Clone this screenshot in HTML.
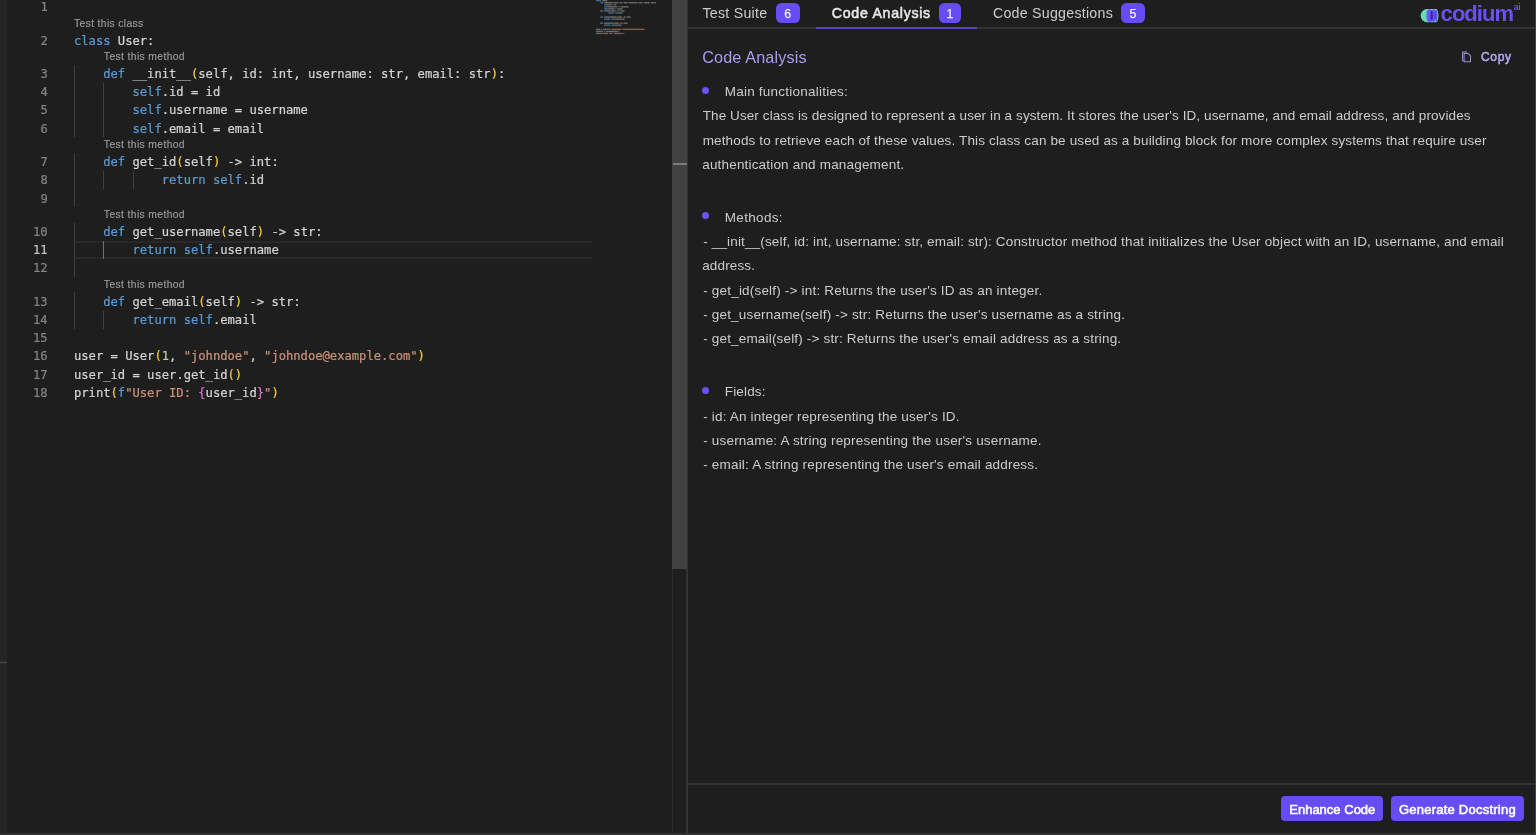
<!DOCTYPE html>
<html lang="en">
<head>
<meta charset="utf-8">
<title>Codium - Code Analysis</title>
<style>
html,body{margin:0;padding:0;width:1536px;height:835px;overflow:hidden;background:#1e1e1e}
body{position:relative;font-family:"Liberation Sans",Arial,sans-serif;color:#cccccc}
div{box-sizing:border-box}
#root{position:absolute;left:0;top:0;width:1536px;height:835px;will-change:transform}
#strip{position:absolute;left:0;top:0;width:7px;height:833px;background:#252526;border-right:0}
#strip b{position:absolute;left:7px;top:0;width:1px;height:833px;background:#202020}
#strip i{position:absolute;left:0;top:661px;width:7px;height:3px;background:linear-gradient(#2b2b2c 0 33.3%,#454545 33.3% 66.6%,#2c2c2d 66.6% 100%)}
#ed{position:absolute;left:0;top:0;width:672px;height:833px;overflow:hidden}
.no,.ln{position:absolute;font-family:"DejaVu Sans Mono","Liberation Mono",monospace;font-size:12.15px;line-height:18.22px;height:18.22px;white-space:pre;color:#d4d4d4}
.no{left:0;width:47.7px;text-align:right;color:#858585;-webkit-text-stroke:0.2px}
.no.act{color:#c6c6c6}
.ln{left:74px;-webkit-text-stroke:0.22px}
.k{color:#5a9ad5}.s{color:#ce9178}.n{color:#b5cea8}.b1{color:#f2cb3a}.b2{color:#da70d6}
.lens{position:absolute;font-family:"Liberation Sans",Arial,sans-serif;font-size:10.3px;line-height:15.19px;height:15.19px;color:#9c9c9c;white-space:pre;-webkit-text-stroke:0.15px}
.g{position:absolute;width:1px;background:#404040}
.g.ga{background:#707070}
.cl{position:absolute;left:74px;width:518px;border-top:2px solid #282828;border-bottom:2px solid #282828;box-sizing:content-box}
#sb{position:absolute;left:672px;top:0;width:15px;height:569px;background:#424242;border-right:0 solid #313131}
#sb2{position:absolute;left:687px;top:0;width:1px;height:569px;background:#323232}
#sb i{position:absolute;left:1px;top:163px;width:13.5px;height:2px;background:#7a7a7a}
.vl{position:absolute;background:#2b2b2b}
.t{position:absolute;white-space:pre}
.bdg{position:absolute;top:2.6px;height:20.2px;-webkit-text-stroke:0.25px;border-radius:5.5px;background:#654df3;color:#f1eeff;font-size:12.3px;line-height:22.2px;text-align:center}
.dot{position:absolute;left:702.2px;width:7px;height:7px;border-radius:50%;background:#6a52f5}
.btn{position:absolute;top:796.3px;height:24.7px;border-radius:4px;background:#654df3}
</style>
</head>
<body>
<div id="root">
<div id="strip"><i></i><b></b></div>
<div id="ed">
<div class="cl" style="top:240.78px;height:14.22px"></div>
<div class="g" style="left:74.00px;top:64.62px;height:72.89px"></div>
<div class="g" style="left:74.00px;top:152.70px;height:54.67px"></div>
<div class="g" style="left:74.00px;top:222.55px;height:54.67px"></div>
<div class="g" style="left:74.00px;top:292.41px;height:36.45px"></div>
<div class="g" style="left:103.26px;top:82.84px;height:54.67px"></div>
<div class="g" style="left:103.26px;top:170.92px;height:18.22px"></div>
<div class="g" style="left:132.51px;top:170.92px;height:18.22px"></div>
<div class="g" style="left:103.26px;top:310.63px;height:18.22px"></div>
<div class="g ga" style="left:103.26px;top:240.78px;height:18.22px"></div>
<div class="no" style="top:-2.00px">1</div>
<div class="no" style="top:32.00px">2</div>
<div class="ln" style="top:32.00px"><span class="k">class</span> User:</div>
<div class="lens" style="top:16.00px;left:74.10px;letter-spacing:0.355px">Test this class</div>
<div class="no" style="top:65.00px">3</div>
<div class="ln" style="top:65.00px">    <span class="k">def</span> __init__<span class="b1">(</span>self, id: int, username: str, email: str<span class="b1">)</span>:</div>
<div class="lens" style="top:49.00px;left:103.86px;letter-spacing:0.384px">Test this method</div>
<div class="no" style="top:83.00px">4</div>
<div class="ln" style="top:83.00px">        <span class="k">self</span>.id = id</div>
<div class="no" style="top:101.00px">5</div>
<div class="ln" style="top:101.00px">        <span class="k">self</span>.username = username</div>
<div class="no" style="top:120.00px">6</div>
<div class="ln" style="top:120.00px">        <span class="k">self</span>.email = email</div>
<div class="no" style="top:153.00px">7</div>
<div class="ln" style="top:153.00px">    <span class="k">def</span> get_id<span class="b1">(</span>self<span class="b1">)</span> -&gt; int:</div>
<div class="lens" style="top:137.00px;left:103.86px;letter-spacing:0.384px">Test this method</div>
<div class="no" style="top:171.00px">8</div>
<div class="ln" style="top:171.00px">            <span class="k">return</span> <span class="k">self</span>.id</div>
<div class="no" style="top:190.00px">9</div>
<div class="no" style="top:223.00px">10</div>
<div class="ln" style="top:223.00px">    <span class="k">def</span> get_username<span class="b1">(</span>self<span class="b1">)</span> -&gt; str:</div>
<div class="lens" style="top:207.00px;left:103.86px;letter-spacing:0.384px">Test this method</div>
<div class="no act" style="top:241.00px">11</div>
<div class="ln" style="top:241.00px">        <span class="k">return</span> <span class="k">self</span>.username</div>
<div class="no" style="top:259.00px">12</div>
<div class="no" style="top:293.00px">13</div>
<div class="ln" style="top:293.00px">    <span class="k">def</span> get_email<span class="b1">(</span>self<span class="b1">)</span> -&gt; str:</div>
<div class="lens" style="top:277.00px;left:103.86px;letter-spacing:0.384px">Test this method</div>
<div class="no" style="top:311.00px">14</div>
<div class="ln" style="top:311.00px">        <span class="k">return</span> <span class="k">self</span>.email</div>
<div class="no" style="top:329.00px">15</div>
<div class="no" style="top:347.00px">16</div>
<div class="ln" style="top:347.00px">user = User<span class="b1">(</span><span class="n">1</span>, <span class="s">"johndoe"</span>, <span class="s">"johndoe@example.com"</span><span class="b1">)</span></div>
<div class="no" style="top:366.00px">17</div>
<div class="ln" style="top:366.00px">user_id = user.get_id<span class="b1">()</span></div>
<div class="no" style="top:384.00px">18</div>
<div class="ln" style="top:384.00px">print<span class="b1">(</span><span class="k">f</span><span class="s">"User ID: </span><span class="b2">{</span>user_id<span class="b2">}</span><span class="s">"</span><span class="b1">)</span></div>
</div>
<svg id="mm" style="position:absolute;left:585px;top:0" width="86" height="40" viewBox="0 0 86 40"><rect x="11.10" y="-0.05" width="5.07" height="1.4" fill="#569cd6" opacity="0.6"/><rect x="17.19" y="-0.05" width="5.07" height="1.4" fill="#d4d4d4" opacity="0.42"/><rect x="15.16" y="2.00" width="3.04" height="1.4" fill="#569cd6" opacity="0.6"/><rect x="19.22" y="2.00" width="8.12" height="1.4" fill="#d4d4d4" opacity="0.42"/><rect x="27.34" y="2.00" width="1.01" height="1.4" fill="#ffd700" opacity="0.3"/><rect x="28.36" y="2.00" width="5.07" height="1.4" fill="#d4d4d4" opacity="0.42"/><rect x="34.45" y="2.00" width="3.04" height="1.4" fill="#d4d4d4" opacity="0.42"/><rect x="38.50" y="2.00" width="4.06" height="1.4" fill="#d4d4d4" opacity="0.42"/><rect x="43.58" y="2.00" width="9.13" height="1.4" fill="#d4d4d4" opacity="0.42"/><rect x="53.73" y="2.00" width="4.06" height="1.4" fill="#d4d4d4" opacity="0.42"/><rect x="58.81" y="2.00" width="6.09" height="1.4" fill="#d4d4d4" opacity="0.42"/><rect x="65.91" y="2.00" width="3.04" height="1.4" fill="#d4d4d4" opacity="0.42"/><rect x="68.96" y="2.00" width="1.01" height="1.4" fill="#ffd700" opacity="0.3"/><rect x="69.97" y="2.00" width="1.01" height="1.4" fill="#d4d4d4" opacity="0.42"/><rect x="19.22" y="4.05" width="4.06" height="1.4" fill="#569cd6" opacity="0.6"/><rect x="23.28" y="4.05" width="3.04" height="1.4" fill="#d4d4d4" opacity="0.42"/><rect x="27.34" y="4.05" width="1.01" height="1.4" fill="#d4d4d4" opacity="0.42"/><rect x="29.37" y="4.05" width="2.03" height="1.4" fill="#d4d4d4" opacity="0.42"/><rect x="19.22" y="6.10" width="4.06" height="1.4" fill="#569cd6" opacity="0.6"/><rect x="23.28" y="6.10" width="9.13" height="1.4" fill="#d4d4d4" opacity="0.42"/><rect x="33.43" y="6.10" width="1.01" height="1.4" fill="#d4d4d4" opacity="0.42"/><rect x="35.46" y="6.10" width="8.12" height="1.4" fill="#d4d4d4" opacity="0.42"/><rect x="19.22" y="8.15" width="4.06" height="1.4" fill="#569cd6" opacity="0.6"/><rect x="23.28" y="8.15" width="6.09" height="1.4" fill="#d4d4d4" opacity="0.42"/><rect x="30.38" y="8.15" width="1.01" height="1.4" fill="#d4d4d4" opacity="0.42"/><rect x="32.41" y="8.15" width="5.07" height="1.4" fill="#d4d4d4" opacity="0.42"/><rect x="15.16" y="10.20" width="3.04" height="1.4" fill="#569cd6" opacity="0.6"/><rect x="19.22" y="10.20" width="6.09" height="1.4" fill="#d4d4d4" opacity="0.42"/><rect x="25.31" y="10.20" width="1.01" height="1.4" fill="#ffd700" opacity="0.3"/><rect x="26.33" y="10.20" width="4.06" height="1.4" fill="#d4d4d4" opacity="0.42"/><rect x="30.38" y="10.20" width="1.01" height="1.4" fill="#ffd700" opacity="0.3"/><rect x="32.41" y="10.20" width="2.03" height="1.4" fill="#d4d4d4" opacity="0.42"/><rect x="35.46" y="10.20" width="4.06" height="1.4" fill="#d4d4d4" opacity="0.42"/><rect x="23.28" y="12.25" width="6.09" height="1.4" fill="#569cd6" opacity="0.6"/><rect x="30.38" y="12.25" width="4.06" height="1.4" fill="#569cd6" opacity="0.6"/><rect x="34.45" y="12.25" width="3.04" height="1.4" fill="#d4d4d4" opacity="0.42"/><rect x="15.16" y="16.35" width="3.04" height="1.4" fill="#569cd6" opacity="0.6"/><rect x="19.22" y="16.35" width="12.18" height="1.4" fill="#d4d4d4" opacity="0.42"/><rect x="31.40" y="16.35" width="1.01" height="1.4" fill="#ffd700" opacity="0.3"/><rect x="32.41" y="16.35" width="4.06" height="1.4" fill="#d4d4d4" opacity="0.42"/><rect x="36.48" y="16.35" width="1.01" height="1.4" fill="#ffd700" opacity="0.3"/><rect x="38.50" y="16.35" width="2.03" height="1.4" fill="#d4d4d4" opacity="0.42"/><rect x="41.55" y="16.35" width="4.06" height="1.4" fill="#d4d4d4" opacity="0.42"/><rect x="19.22" y="18.40" width="6.09" height="1.4" fill="#569cd6" opacity="0.6"/><rect x="26.33" y="18.40" width="4.06" height="1.4" fill="#569cd6" opacity="0.6"/><rect x="30.38" y="18.40" width="9.13" height="1.4" fill="#d4d4d4" opacity="0.42"/><rect x="15.16" y="22.50" width="3.04" height="1.4" fill="#569cd6" opacity="0.6"/><rect x="19.22" y="22.50" width="9.13" height="1.4" fill="#d4d4d4" opacity="0.42"/><rect x="28.36" y="22.50" width="1.01" height="1.4" fill="#ffd700" opacity="0.3"/><rect x="29.37" y="22.50" width="4.06" height="1.4" fill="#d4d4d4" opacity="0.42"/><rect x="33.43" y="22.50" width="1.01" height="1.4" fill="#ffd700" opacity="0.3"/><rect x="35.46" y="22.50" width="2.03" height="1.4" fill="#d4d4d4" opacity="0.42"/><rect x="38.50" y="22.50" width="4.06" height="1.4" fill="#d4d4d4" opacity="0.42"/><rect x="19.22" y="24.55" width="6.09" height="1.4" fill="#569cd6" opacity="0.6"/><rect x="26.33" y="24.55" width="4.06" height="1.4" fill="#569cd6" opacity="0.6"/><rect x="30.38" y="24.55" width="6.09" height="1.4" fill="#d4d4d4" opacity="0.42"/><rect x="11.10" y="28.65" width="4.06" height="1.4" fill="#d4d4d4" opacity="0.42"/><rect x="16.18" y="28.65" width="1.01" height="1.4" fill="#d4d4d4" opacity="0.42"/><rect x="18.21" y="28.65" width="4.06" height="1.4" fill="#d4d4d4" opacity="0.42"/><rect x="22.26" y="28.65" width="1.01" height="1.4" fill="#ffd700" opacity="0.3"/><rect x="23.28" y="28.65" width="1.01" height="1.4" fill="#b5cea8" opacity="0.4"/><rect x="24.30" y="28.65" width="1.01" height="1.4" fill="#d4d4d4" opacity="0.42"/><rect x="26.33" y="28.65" width="9.13" height="1.4" fill="#ce9178" opacity="0.55"/><rect x="35.46" y="28.65" width="1.01" height="1.4" fill="#d4d4d4" opacity="0.42"/><rect x="37.49" y="28.65" width="21.31" height="1.4" fill="#ce9178" opacity="0.55"/><rect x="58.81" y="28.65" width="1.01" height="1.4" fill="#ffd700" opacity="0.3"/><rect x="11.10" y="30.70" width="7.10" height="1.4" fill="#d4d4d4" opacity="0.42"/><rect x="19.22" y="30.70" width="1.01" height="1.4" fill="#d4d4d4" opacity="0.42"/><rect x="21.25" y="30.70" width="11.16" height="1.4" fill="#d4d4d4" opacity="0.42"/><rect x="32.41" y="30.70" width="2.03" height="1.4" fill="#ffd700" opacity="0.3"/><rect x="11.10" y="32.75" width="5.07" height="1.4" fill="#d4d4d4" opacity="0.42"/><rect x="16.18" y="32.75" width="1.01" height="1.4" fill="#ffd700" opacity="0.3"/><rect x="17.19" y="32.75" width="1.01" height="1.4" fill="#569cd6" opacity="0.6"/><rect x="18.21" y="32.75" width="5.07" height="1.4" fill="#ce9178" opacity="0.55"/><rect x="24.30" y="32.75" width="3.04" height="1.4" fill="#ce9178" opacity="0.55"/><rect x="28.36" y="32.75" width="1.01" height="1.4" fill="#da70d6" opacity="0.3"/><rect x="29.37" y="32.75" width="7.10" height="1.4" fill="#d4d4d4" opacity="0.42"/><rect x="36.48" y="32.75" width="1.01" height="1.4" fill="#da70d6" opacity="0.3"/><rect x="37.49" y="32.75" width="1.01" height="1.4" fill="#ce9178" opacity="0.55"/><rect x="38.50" y="32.75" width="1.01" height="1.4" fill="#ffd700" opacity="0.3"/></svg>
<div class="vl" style="left:672px;top:569px;width:1px;height:264px;background:#2c2c2c"></div>
<div class="vl" style="left:686px;top:569px;width:2px;height:264px;background:#333333"></div>
<div id="sb"><i></i></div><div id="sb2"></div>
<div id="hdrline" style="position:absolute;left:688px;top:27px;width:848px;height:1.5px;background:#333333"></div>
<div id="tabul" style="position:absolute;left:815.6px;top:26.8px;width:161.5px;height:2px;background:#5644c6"></div>
<div class="bdg" style="left:776px;width:23.5px">6</div>
<div class="bdg" style="left:939px;width:22px">1</div>
<div class="bdg" style="left:1121px;width:24px">5</div>
<div class="dot" style="top:87px"></div>
<div class="dot" style="top:212.4px"></div>
<div class="dot" style="top:386.8px"></div>
<svg id="logo" style="position:absolute;left:1420px;top:8px" width="20" height="16" viewBox="0 0 20 16">
<defs><linearGradient id="lg1" x1="0" y1="0" x2="1" y2="0"><stop offset="0" stop-color="#65b4c8"/><stop offset="0.35" stop-color="#6a4ff5"/><stop offset="1" stop-color="#6a4ff5"/></linearGradient></defs>
<path d="M7.2 1 H16.8 Q20.4 7.6 16.8 14.2 H7.2 A6.6 6.6 0 0 1 7.2 1 Z" fill="#66deb4"/>
<ellipse cx="9.6" cy="7.6" rx="4.0" ry="6.4" fill="url(#lg1)"/>
<ellipse cx="13.6" cy="7.6" rx="2.3" ry="6.5" fill="#6a4ff5"/>
<ellipse cx="16.3" cy="7.6" rx="1.3" ry="6.2" fill="#6a4ff5"/>
<ellipse cx="11.7" cy="7.6" rx="1.0" ry="4.9" fill="#2c1fb0"/>
<ellipse cx="15.2" cy="7.6" rx="0.5" ry="3.8" fill="#4b39d2"/>
</svg>
<div class="t" id="brand" style="left:1440.6px;top:1.4px;font-size:22px;line-height:26px;font-weight:700;letter-spacing:-0.95px;color:#6b50f6">codium</div>
<div class="t" id="brandai" style="left:1513.7px;top:1.9px;font-size:8.6px;line-height:10px;font-weight:700;letter-spacing:-0.2px;color:#6b50f6">ai</div>
<svg id="cpy" style="position:absolute;left:1461.2px;top:50.6px" width="11.2" height="12.1" viewBox="0 0 12 13" fill="none" stroke="#9b8fd8" stroke-width="1.1" stroke-linejoin="round">
<path d="M2.6 10.6 H1.6 V1 H6.6"/>
<path d="M3.3 2.6 H7.6 L10.2 5.2 V11.6 H3.3 Z"/>
</svg>
<div id="ftline" style="position:absolute;left:688px;top:783px;width:848px;height:1.5px;background:#333333"></div>
<div class="btn" style="left:1281.3px;width:102px"></div>
<div class="btn" style="left:1391px;width:133px"></div>
<div class="vl" style="left:1535px;top:0;width:1px;height:833px;background:#444444"></div>

<div class="t" id="tab1" style="left:702.45px;top:3.00px;font-size:14.2px;letter-spacing:0.255px;color:#cccccc;line-height:20px">Test Suite</div>
<div class="t" id="tab2" style="left:831.75px;top:3.00px;font-size:14.2px;letter-spacing:0.712px;color:#e7e7e7;line-height:20px;-webkit-text-stroke:0.55px #e7e7e7">Code Analysis</div>
<div class="t" id="tab3" style="left:992.95px;top:3.00px;font-size:14.2px;letter-spacing:0.257px;color:#cccccc;line-height:20px">Code Suggestions</div>
<div class="t" id="title" style="left:702.13px;top:47.00px;font-size:16.2px;letter-spacing:0.162px;color:#a99df3;line-height:20px">Code Analysis</div>
<div class="t" id="copy" style="left:1480.88px;top:47.00px;font-size:12.0px;letter-spacing:0.726px;color:#b3a7f0;line-height:20px;-webkit-text-stroke:0.55px #b3a7f0">Copy</div>
<div class="t" id="h1" style="left:724.69px;top:82.00px;font-size:13.5px;letter-spacing:0.230px;color:#cccccc;line-height:20px">Main functionalities:</div>
<div class="t" id="p1" style="left:702.69px;top:106.00px;font-size:13.5px;letter-spacing:0.095px;color:#cccccc;line-height:20px">The User class is designed to represent a user in a system. It stores the user's ID, username, and email address, and provides</div>
<div class="t" id="p2" style="left:702.69px;top:131.00px;font-size:13.5px;letter-spacing:0.142px;color:#cccccc;line-height:20px">methods to retrieve each of these values. This class can be used as a building block for more complex systems that require user</div>
<div class="t" id="p3" style="left:702.19px;top:155.00px;font-size:13.5px;letter-spacing:0.181px;color:#cccccc;line-height:20px">authentication and management.</div>
<div class="t" id="h2" style="left:724.79px;top:208.00px;font-size:13.5px;letter-spacing:0.319px;color:#cccccc;line-height:20px">Methods:</div>
<div class="t" id="m1" style="left:703.21px;top:232.00px;font-size:13.5px;letter-spacing:0.154px;color:#cccccc;line-height:20px">- __init__(self, id: int, username: str, email: str): Constructor method that initializes the User object with an ID, username, and email</div>
<div class="t" id="m2" style="left:702.19px;top:256.00px;font-size:13.5px;letter-spacing:0.150px;color:#cccccc;line-height:20px">address.</div>
<div class="t" id="m3" style="left:703.21px;top:281.00px;font-size:13.5px;letter-spacing:0.192px;color:#cccccc;line-height:20px">- get_id(self) -&gt; int: Returns the user's ID as an integer.</div>
<div class="t" id="m4" style="left:703.21px;top:305.00px;font-size:13.5px;letter-spacing:0.179px;color:#cccccc;line-height:20px">- get_username(self) -&gt; str: Returns the user's username as a string.</div>
<div class="t" id="m5" style="left:703.21px;top:329.00px;font-size:13.5px;letter-spacing:0.172px;color:#cccccc;line-height:20px">- get_email(self) -&gt; str: Returns the user's email address as a string.</div>
<div class="t" id="h3" style="left:724.79px;top:382.00px;font-size:13.5px;letter-spacing:0.160px;color:#cccccc;line-height:20px">Fields:</div>
<div class="t" id="f1" style="left:703.21px;top:407.00px;font-size:13.5px;letter-spacing:0.176px;color:#cccccc;line-height:20px">- id: An integer representing the user's ID.</div>
<div class="t" id="f2" style="left:703.21px;top:431.00px;font-size:13.5px;letter-spacing:0.189px;color:#cccccc;line-height:20px">- username: A string representing the user's username.</div>
<div class="t" id="f3" style="left:703.21px;top:455.00px;font-size:13.5px;letter-spacing:0.187px;color:#cccccc;line-height:20px">- email: A string representing the user's email address.</div>
<div class="t" id="btn1" style="left:1289.22px;top:800.00px;font-size:13.0px;letter-spacing:0.010px;color:#ffffff;line-height:20px;-webkit-text-stroke:0.55px #ffffff">Enhance Code</div>
<div class="t" id="btn2" style="left:1398.92px;top:800.00px;font-size:13.0px;letter-spacing:0.239px;color:#ffffff;line-height:20px;-webkit-text-stroke:0.55px #ffffff">Generate Docstring</div>
<div class="vl" style="left:0;top:833px;width:1536px;height:2px;background:#2f2f2f"></div>
</div>
</body>
</html>
